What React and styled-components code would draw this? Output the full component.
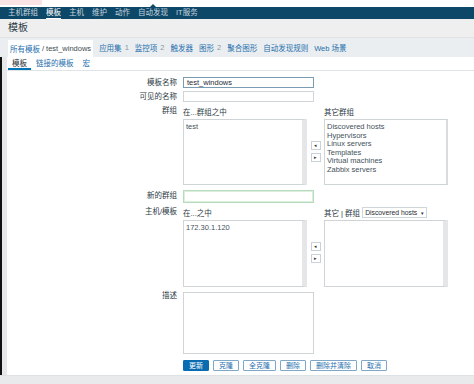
import React from "react";
import styled, { createGlobalStyle } from "styled-components";

const GlobalStyle = createGlobalStyle`
  html, body {
    margin: 0;
    padding: 0;
    background: #ffffff;
  }
  body {
    font-family: "Liberation Sans", "Noto Sans CJK SC", sans-serif;
    font-size: 8px;
    color: #1f2c33;
  }
`;

const navItems = ["主机群组", "模板", "主机", "维护", "动作", "自动发现", "IT服务"];
const tabs = [
  { label: "应用集", count: 1 },
  { label: "监控项", count: 2 },
  { label: "触发器" },
  { label: "图形", count: 2 },
  { label: "聚合图形" },
  { label: "自动发现规则" },
  { label: "Web 场景" }
];
const otherGroups = [
  "Discovered hosts",
  "Hypervisors",
  "Linux servers",
  "Templates",
  "Virtual machines",
  "Zabbix servers"
];
const actions = ["克隆", "全克隆", "删除", "删除并清除", "取消"];

const TwinList = ({ leftTitle, rightTitle, leftItems, rightItems, rightScroll, height }) => (
  <Twin>
    <TwinCol>
      <ListTitle>{leftTitle}</ListTitle>
      <ListBox $height={height} $scroll>
        {leftItems.map(item => (
          <ListItem key={item}>{item}</ListItem>
        ))}
      </ListBox>
    </TwinCol>
    <Arrows>
      <ArrowButton>◂</ArrowButton>
      <ArrowButton>▸</ArrowButton>
    </Arrows>
    <TwinCol>
      <ListTitle>{rightTitle}</ListTitle>
      <ListBox $height={height} $scroll={rightScroll}>
        {rightItems.map(item => (
          <ListItem key={item}>{item}</ListItem>
        ))}
      </ListBox>
    </TwinCol>
  </Twin>
);

const App = () => (
  <>
    <GlobalStyle />
    <Page>
      <TopStrip>
        <PinkBlock />
        <Pointer />
      </TopStrip>
      <NavBar>
        {navItems.map(item => (
          <NavItem key={item} $active={item === "模板"}>
            {item}
          </NavItem>
        ))}
      </NavBar>
      <TitleBar>模板</TitleBar>
      <TabBar>
        <Crumb>
          <CrumbLink>所有模板</CrumbLink>
          <span>/</span>
          <span>test_windows</span>
        </Crumb>
        {tabs.map(tab => (
          <TabLink key={tab.label}>
            {tab.label}
            {tab.count && <Count>{tab.count}</Count>}
          </TabLink>
        ))}
      </TabBar>
      <Body>
        <Edge />
        <Panel>
          <SubTabs>
            <SubTab $active>模板</SubTab>
            <SubTab>链接的模板</SubTab>
            <SubTab>宏</SubTab>
          </SubTabs>
          <Form>
            <Row>
              <Label>模板名称</Label>
              <TextInput $active>test_windows</TextInput>
            </Row>
            <Row>
              <Label>可见的名称</Label>
              <TextInput />
            </Row>
            <Row $top>
              <Label>群组</Label>
              <TwinList
                leftTitle="在...群组之中"
                rightTitle="其它群组"
                leftItems={["test"]}
                rightItems={otherGroups}
                height={66}
              />
            </Row>
            <Row>
              <Label>新的群组</Label>
              <TextInput $green />
            </Row>
            <Row $top>
              <Label>主机/模板</Label>
              <TwinList
                leftTitle="在...之中"
                rightTitle={
                  <>
                    其它 | 群组
                    <Select>
                      Discovered hosts <Caret>▾</Caret>
                    </Select>
                  </>
                }
                leftItems={["172.30.1.120"]}
                rightItems={[]}
                rightScroll
                height={67}
              />
            </Row>
            <Row $top>
              <Label>描述</Label>
              <TextArea />
            </Row>
            <Row>
              <Label />
              <Buttons>
                <Button $primary>更新</Button>
                {actions.map(a => (
                  <Button key={a}>{a}</Button>
                ))}
              </Buttons>
            </Row>
          </Form>
        </Panel>
      </Body>
      <Footer />
    </Page>
  </>
);

const Page = styled.div`
  width: 474px;
  height: 384px;
  display: flex;
  flex-direction: column;
  overflow: hidden;
`;

const TopStrip = styled.div`
  height: 7px;
  position: relative;
  background: #ffffff;
`;

const PinkBlock = styled.div`
  width: 42px;
  height: 5px;
  background: #f9e3e5;
`;

const Pointer = styled.div`
  position: absolute;
  left: 150px;
  bottom: 0;
  width: 0;
  height: 0;
  border-left: 3px solid transparent;
  border-right: 3px solid transparent;
  border-bottom: 3px solid #0e4868;
`;

const NavBar = styled.div`
  height: 12px;
  background: #0e4868;
  display: flex;
  align-items: center;
  gap: 8px;
  padding-left: 8px;
`;

const NavItem = styled.span`
  color: ${p => (p.$active ? "#ffffff" : "#c6d4de")};
  font-size: 7.5px;
  line-height: 12px;
  height: 12px;
  box-sizing: border-box;
  border-bottom: ${p => (p.$active ? "1px solid #ffffff" : "none")};
`;

const TitleBar = styled.div`
  height: 18px;
  background: #efefef;
  color: #2c3b44;
  font-size: 10px;
  line-height: 18px;
  padding-left: 8px;
  border-bottom: 1px solid #e2e2e2;
`;

const TabBar = styled.div`
  height: 19px;
  background: #ebeef0;
  display: flex;
  align-items: stretch;
  gap: 6px;
  padding-left: 8px;
`;

const Crumb = styled.div`
  background: #ffffff;
  display: flex;
  align-items: center;
  gap: 2px;
  padding: 0 2px 0 2px;
  margin-top: 2px;
  color: #3d4a52;
  font-size: 7.5px;
`;

const CrumbLink = styled.span`
  color: #1f6fae;
`;

const TabLink = styled.span`
  display: flex;
  align-items: center;
  color: #1f6fae;
  font-size: 7.5px;
`;

const Count = styled.span`
  color: #8a97a0;
  margin-left: 3px;
`;

const Body = styled.div`
  flex: 1;
  display: flex;
  min-height: 0;
`;

const Edge = styled.div`
  width: 2px;
  background: #111111;
  border-right: 5px solid #e6e8ea;
`;

const Panel = styled.div`
  flex: 1;
  background: #ffffff;
  display: flex;
  flex-direction: column;
`;

const SubTabs = styled.div`
  height: 13px;
  display: flex;
  align-items: stretch;
  gap: 1px;
  padding-left: 1px;
  border-bottom: 1px solid #dfe4e7;
`;

const SubTab = styled.span`
  display: flex;
  align-items: center;
  padding: 0 4px;
  font-size: 7.5px;
  color: ${p => (p.$active ? "#1f2c33" : "#1f6fae")};
  border-bottom: 2px solid ${p => (p.$active ? "#0275b8" : "transparent")};
`;

const Form = styled.div`
  display: flex;
  flex-direction: column;
  gap: 3px;
  padding-top: 6px;
`;

const Row = styled.div`
  display: flex;
  align-items: ${p => (p.$top ? "flex-start" : "center")};
  gap: 6px;
`;

const Label = styled.div`
  width: 170px;
  flex-shrink: 0;
  text-align: right;
  font-size: 7.5px;
  line-height: 11px;
  color: #2c3b44;
`;

const TextInput = styled.div`
  width: 131px;
  height: ${p => (p.$green ? "13px" : "11px")};
  box-sizing: border-box;
  border: 1px solid
    ${p => (p.$active ? "#7a9cb3" : p.$green ? "#b7dcbd" : "#cfd6da")};
  box-shadow: ${p => (p.$green ? "inset 0 0 0 1px #dcefdf" : "none")};
  padding: 0 3px;
  font-size: 7.5px;
  line-height: 9px;
  color: #1f2c33;
  margin-top: ${p => (p.$green ? "2px" : "0")};
`;

const Twin = styled.div`
  display: flex;
  align-items: flex-start;
`;

const TwinCol = styled.div`
  display: flex;
  flex-direction: column;
  gap: 2px;
  width: 124px;
`;

const ListTitle = styled.div`
  height: 12px;
  display: flex;
  align-items: center;
  gap: 2px;
  font-size: 7.5px;
  color: #2c3b44;
  white-space: nowrap;
`;

const ListBox = styled.div`
  height: ${p => p.$height}px;
  box-sizing: border-box;
  border: 1px solid #cfd4d7;
  border-right: ${p => (p.$scroll ? "5px solid #e4e6e8" : "2px solid #d9dcde")};
  padding: 3px 2px;
`;

const ListItem = styled.div`
  font-size: 7.5px;
  line-height: 8.5px;
  color: #44525b;
`;

const Arrows = styled.div`
  width: 17px;
  align-self: center;
  display: flex;
  flex-direction: column;
  align-items: center;
  gap: 3px;
  padding-top: 12px;
`;

const ArrowButton = styled.div`
  width: 10px;
  height: 9px;
  box-sizing: border-box;
  border: 1px solid #c9d2d8;
  background: #ffffff;
  font-size: 5px;
  line-height: 7px;
  text-align: center;
  color: #333333;
`;

const Select = styled.div`
  height: 11px;
  box-sizing: border-box;
  border: 1px solid #cfd6da;
  padding: 0 2px;
  font-size: 6.8px;
  line-height: 9px;
  color: #1f2c33;
  white-space: nowrap;
`;

const Caret = styled.span`
  font-size: 5px;
  margin-left: 2px;
`;

const TextArea = styled.div`
  width: 131px;
  height: 62px;
  box-sizing: border-box;
  border: 1px solid #cfd4d7;
  margin-top: 2px;
`;

const Buttons = styled.div`
  display: flex;
  gap: 4px;
  margin-top: 3px;
`;

const Button = styled.div`
  height: 11px;
  box-sizing: border-box;
  padding: 0 5px;
  border: 1px solid ${p => (p.$primary ? "#0a6cb0" : "#7fa8c8")};
  background: ${p => (p.$primary ? "#0a6cb0" : "#ffffff")};
  color: ${p => (p.$primary ? "#ffffff" : "#1f6fae")};
  font-size: 7px;
  line-height: 9px;
  border-radius: 1px;
`;

const Footer = styled.div`
  height: 8px;
  background: #e8eaec;
  border-top: 1px solid #dfe2e4;
`;

export default App;
